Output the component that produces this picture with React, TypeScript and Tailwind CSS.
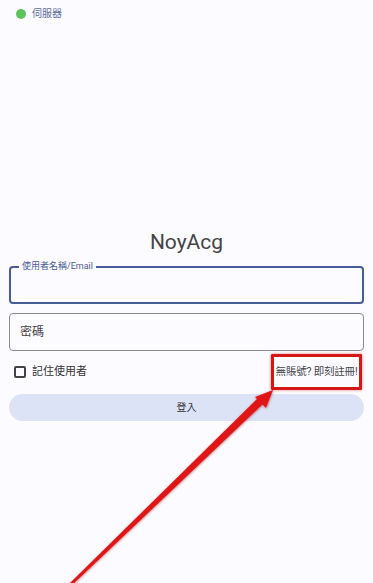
import React from "react";

export default function App() {
  return (
    <div className="relative h-[583px] w-[373px] overflow-hidden bg-[#fcfbff]" style={{ fontFamily: "Roboto, 'Noto Sans CJK TC', sans-serif" }}>
      <div className="flex items-center gap-[6px] pl-[16px] pt-[8px]">
        <span className="h-[10px] w-[10px] rounded-full bg-[#5cc35c]" />
        <span className="text-[10px] leading-[12px] text-[#5a6ca0]">伺服器</span>
      </div>

      <div className="mt-[209px] text-center text-[21px] leading-[26px] text-[#444448]">NoyAcg</div>

      <div className="mx-[9px] mt-[11px] flex flex-col">
        <div className="relative h-[38px] rounded-[4px] border-2 border-[#4a5c98]">
          <span className="absolute left-[8px] top-[-8px] bg-[#fcfbff] px-[3px] text-[9px] leading-[12px] text-[#4a5c98]">使用者名稱/Email</span>
        </div>
        <div className="mt-[9px] flex h-[38px] items-center rounded-[4px] border border-[#8a8a90] px-[10px]">
          <span className="text-[12px] text-[#444448]">密碼</span>
        </div>
        <div className="mt-[3px] flex h-[36px] items-center justify-between">
          <div className="flex items-center gap-[6px] pl-[5px]">
            <span className="h-[12px] w-[12px] rounded-[2px] border-2 border-[#444448]" />
            <span className="text-[11px] text-[#333338]">記住使用者</span>
          </div>
          <div className="mr-[2px] flex h-[36px] w-[91px] items-center justify-center rounded-[1px] border-[3px] border-[#d41818] shadow-[0_0_3px_rgba(200,0,0,0.5)]">
            <span className="whitespace-nowrap text-[10.5px] tracking-[-0.2px] text-[#444448]">無賬號? 即刻註冊!</span>
          </div>
        </div>
        <div className="mt-[4px] flex h-[27px] items-center justify-center rounded-full bg-[#dde3f6]">
          <span className="text-[10px] text-[#333338]">登入</span>
        </div>
      </div>

      <svg className="pointer-events-none absolute left-0 top-0" width="373" height="583" viewBox="0 0 373 583">
        <defs>
          <filter id="sh" x="-20%" y="-20%" width="140%" height="140%">
            <feDropShadow dx="0.5" dy="0.5" stdDeviation="1" floodColor="#800000" floodOpacity="0.5" />
          </filter>
        </defs>
        <g filter="url(#sh)">
          <polygon points="69,584 71,586 263,404 258,398" fill="#e01818" />
          <polygon points="273,390 255,397 266,408" fill="#e01818" />
        </g>
      </svg>
    </div>
  );
}
